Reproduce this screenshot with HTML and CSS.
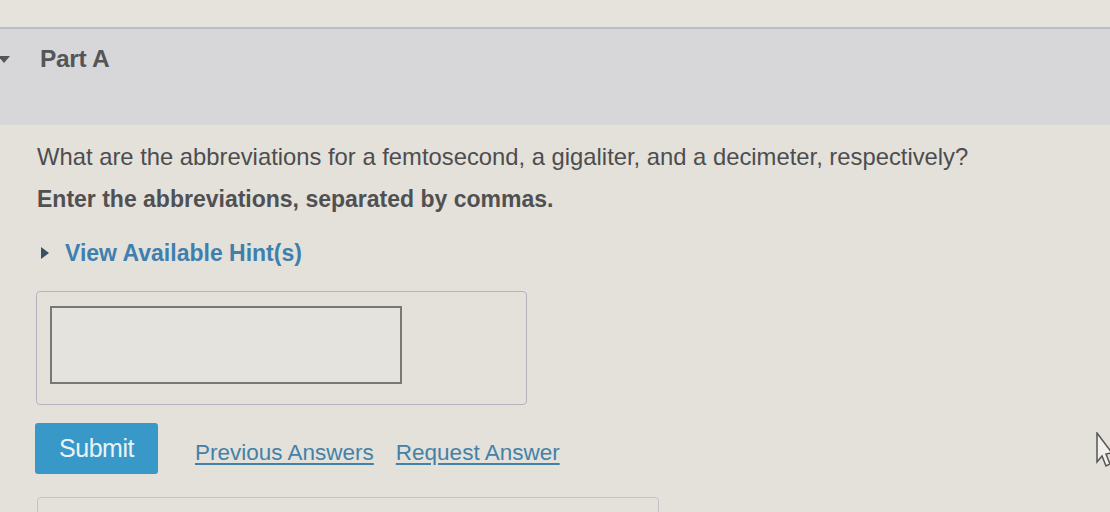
FILE: index.html
```html
<!DOCTYPE html>
<html>
<head>
<meta charset="utf-8">
<link rel="stylesheet" href="styles.css">
</head>
<body>
<div class="page">
  <div class="topstrip"></div>
  <div class="parthead">
    <span class="caret"></span>
    <span class="parttitle">Part A</span>
  </div>
  <div class="content">
    <p class="question">What are the abbreviations for a femtosecond, a gigaliter, and a decimeter, respectively?</p>
    <p class="instr">Enter the abbreviations, separated by commas.</p>
    <div class="hint"><span class="hintarrow"></span><span class="hinttext">View Available Hint(s)</span></div>
    <div class="answerbox">
      <div class="inputfield"></div>
    </div>
    <div class="actions">
      <button class="submit">Submit</button>
      <a class="link prev">Previous Answers</a>
      <a class="link req">Request Answer</a>
    </div>
    <div class="nextbox"></div>
  </div>
  <svg class="cursor" width="16" height="40" viewBox="0 0 16 40"><path d="M1 1 L1 30 L6 24 L10 34 L14 32 L10 22 L16 21 Z" fill="#f2f0ea" stroke="#555" stroke-width="1.5"/></svg>
</div>
</body>
</html>
```
FILE: styles.css
```css
html, body { margin: 0; padding: 0; }
body { background: #e3e0d9; font-family: "Liberation Sans", Arial, sans-serif; }
.page { position: relative; width: 1110px; height: 512px; overflow: hidden; background: #e3e1da; }
.topstrip { height: 27px; background: #e6e3dc; border-bottom: 2px solid #b9bcc8; }
.parthead { height: 96px; background: #d7d7d9; display: flex; align-items: flex-start; }
.caret { width: 0; height: 0; margin-top: 27px; margin-left: -2px; border-left: 6px solid transparent; border-right: 6px solid transparent; border-top: 7px solid #555; }
.parttitle { margin-left: 30px; margin-top: 16px; font-size: 24.5px; font-weight: bold; color: #555558; letter-spacing: -0.3px; }
.content { padding-left: 37px; padding-top: 15px; }
.question { margin: 0; font-size: 23.8px; color: #4d4d4f; line-height: 34px; letter-spacing: 0; }
.instr { margin: 10px 0 0; font-size: 23px; font-weight: bold; color: #505052; line-height: 30px; letter-spacing: 0; }
.hint { margin-top: 26px; display: flex; align-items: center; height: 26px; }
.hintarrow { width: 0; height: 0; margin-left: 4px; border-top: 6px solid transparent; border-bottom: 6px solid transparent; border-left: 8px solid #3a4e66; }
.hinttext { margin-left: 16px; font-size: 23px; font-weight: bold; color: #3f7fae; letter-spacing: 0; }
.answerbox { margin-top: 25px; margin-left: -1px; width: 491px; height: 114px; border: 1.5px solid #b3b3bd; border-radius: 4px; box-sizing: border-box; padding: 14px 0 0 13px; }
.inputfield { width: 352px; height: 78px; border: 2px solid #7a7775; box-sizing: border-box; background: #e5e3dd; }
.actions { margin-top: 18px; margin-left: -2px; display: flex; align-items: center; height: 51px; }
.submit { width: 123px; height: 51px; border: none; border-radius: 3px; background: #3898c8; color: #e9f3f6; font-family: "Liberation Sans", Arial, sans-serif; font-size: 25px; letter-spacing: -0.5px; padding: 0; text-align: center; }
.link { font-size: 22.5px; color: #4481a8; text-decoration: underline; text-underline-offset: 3px; letter-spacing: 0; margin-top: 8px; }
.prev { margin-left: 37px; }
.req { margin-left: 22px; }
.nextbox { margin-top: 23px; width: 620px; height: 40px; border: 1.5px solid #c2c2c8; border-radius: 4px; }
.cursor { position: absolute; left: 1096px; top: 432px; }
```
